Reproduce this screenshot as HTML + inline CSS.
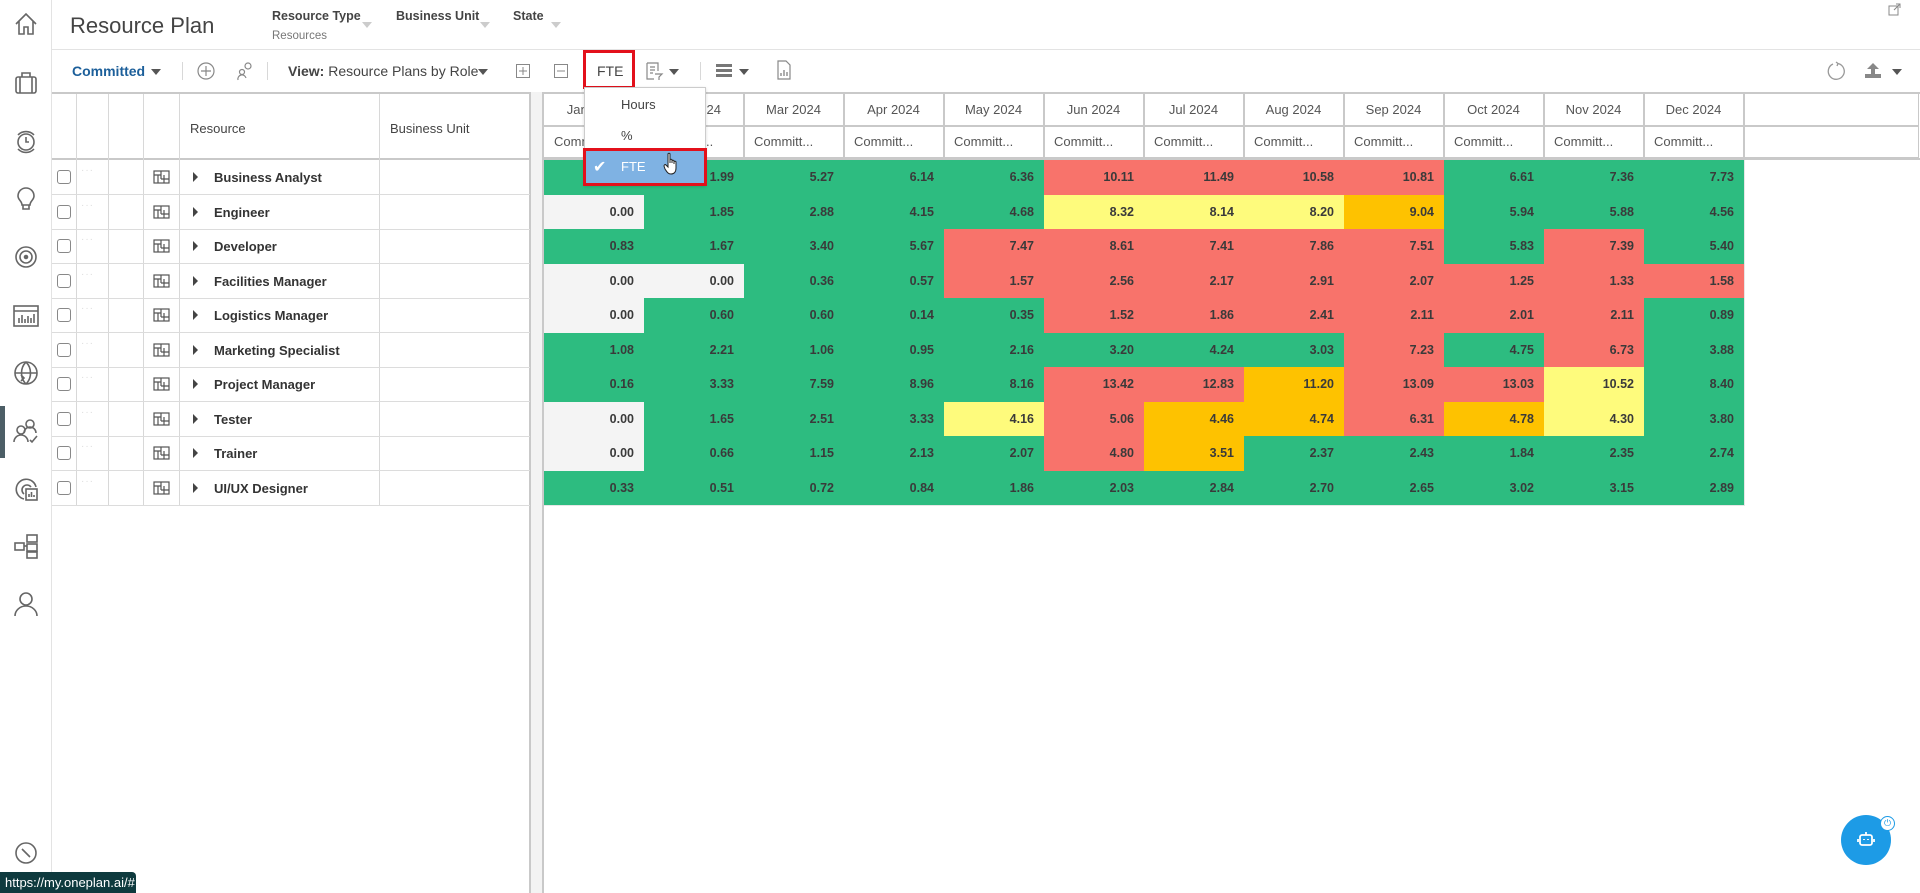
<!DOCTYPE html>
<html><head><meta charset="utf-8"><style>
*{box-sizing:border-box;margin:0;padding:0}
body{width:1920px;height:893px;overflow:hidden;background:#fff;font-family:"Liberation Sans",sans-serif;color:#333;position:relative}
.a{position:absolute}
.sb{left:0;top:0;width:52px;height:893px;border-right:1px solid #e3e3e3}
.ic{position:absolute;left:12px;width:28px;height:28px}
.t{font-size:13px;color:#444;white-space:nowrap}
.vl{position:absolute;background:#d8d8d8;width:1px}
.hl{position:absolute;background:#dcdcdc;height:1px}
.cell{position:absolute;height:34px;font-size:12.5px;font-weight:bold;color:#3a3a3a;text-align:right;padding-right:10px;line-height:34px;border-right:1px solid #e6e6e6;border-bottom:1px solid #e6e6e6}
.g{background:#2dbc80}.r{background:#f8736b}.y{background:#fefb7c}.o{background:#fec200}.n{background:#f4f4f4}
.hd{position:absolute;height:33px;border-right:2px solid #c9c9c9;border-bottom:2px solid #c9c9c9;font-size:13px;color:#555;line-height:31px;white-space:nowrap;overflow:hidden}
.car{display:inline-block;width:0;height:0;border-left:5px solid transparent;border-right:5px solid transparent;border-top:6px solid #555;vertical-align:middle}
</style></head><body>

<!-- sidebar -->
<div class="a sb"></div>
<div class="a" style="left:0;top:406px;width:5px;height:52px;background:#4c5e66"></div>
<svg class="ic" style="top:10px" viewBox="0 0 28 28" fill="none" stroke="#666" stroke-width="1.6"><path d="M4 14 L14 4 L24 14 M7 11 V24 H12 V17 H16 V24 H21 V11"/></svg>
<svg class="ic" style="top:69px" viewBox="0 0 28 28" fill="none" stroke="#666" stroke-width="1.6"><rect x="4" y="8" width="20" height="16" rx="2"/><path d="M10 8V4H18V8M8 8V24M20 8V24"/></svg>
<svg class="ic" style="top:127px" viewBox="0 0 28 28" fill="none" stroke="#666" stroke-width="1.6"><circle cx="14" cy="15" r="8"/><path d="M14 10V15H17M6 8A11 11 0 0 1 22 8M6 22A11 11 0 0 0 22 22"/></svg>
<svg class="ic" style="top:186px" viewBox="0 0 28 28" fill="none" stroke="#666" stroke-width="1.6"><path d="M10 19C10 15 6 14 6 10A8 8 0 0 1 22 10C22 14 18 15 18 19ZM11 19V23H17V19"/></svg>
<svg class="ic" style="top:243px" viewBox="0 0 28 28" fill="none" stroke="#666" stroke-width="1.6"><circle cx="14" cy="14" r="10"/><circle cx="14" cy="14" r="6"/><circle cx="14" cy="14" r="1.5" fill="#666"/></svg>
<svg class="ic" style="top:302px" viewBox="0 0 28 28" fill="none" stroke="#666" stroke-width="1.6"><rect x="2" y="4" width="24" height="20"/><path d="M2 9H26M7 21V16M10 21V13M13 21V17M16 21V14M19 21V16M22 21V12"/></svg>
<svg class="ic" style="top:359px" viewBox="0 0 28 28" fill="none" stroke="#666" stroke-width="1.6"><circle cx="14" cy="14" r="11"/><path d="M3 14H25M14 3C8 9 8 19 14 25M14 3C20 9 20 19 14 25M9 16L12 19L9 22"/></svg>
<svg class="ic" style="top:417px" viewBox="0 0 28 28" fill="none" stroke="#666" stroke-width="1.6"><circle cx="18" cy="7" r="4"/><path d="M12 16A6 6 0 0 1 24 16"/><circle cx="9" cy="13" r="4"/><path d="M2 25A7 7 0 0 1 16 25M18 23L20 25L25 19"/></svg>
<svg class="ic" style="top:475px" viewBox="0 0 28 28" fill="none" stroke="#666" stroke-width="1.6"><path d="M12 24A10 10 0 1 1 24 12"/><path d="M12 19A5 5 0 1 1 19 12"/><rect x="14" y="14" width="11" height="11"/><path d="M17 22V19M19.5 22V17M22 22V20"/></svg>
<svg class="ic" style="top:532px" viewBox="0 0 28 28" fill="none" stroke="#666" stroke-width="1.6"><rect x="3" y="11" width="9" height="7"/><rect x="15" y="3" width="10" height="7"/><rect x="15" y="12" width="10" height="7"/><rect x="15" y="20" width="10" height="6"/><path d="M12 14H15"/></svg>
<svg class="ic" style="top:590px" viewBox="0 0 28 28" fill="none" stroke="#666" stroke-width="1.6"><circle cx="14" cy="9" r="6"/><path d="M3 26A11 10 0 0 1 25 26"/></svg>
<svg class="ic" style="top:839px" viewBox="0 0 28 28" fill="none" stroke="#666" stroke-width="1.6"><circle cx="14" cy="14" r="10"/><path d="M10 10L16 16L18 18L12 12Z"/></svg>

<!-- header -->
<div class="a" style="left:70px;top:13px;font-size:22px;color:#444">Resource Plan</div>
<div class="a t" style="left:272px;top:9px;font-weight:bold;font-size:12.5px">Resource Type</div>
<div class="a t" style="left:272px;top:30px;font-size:11.5px;color:#777">Resources</div>
<div class="a" style="left:362px;top:22px;border-left:5px solid transparent;border-right:5px solid transparent;border-top:6px solid #ccc"></div>
<div class="a t" style="left:396px;top:9px;font-weight:bold;font-size:12.5px">Business Unit</div>
<div class="a" style="left:480px;top:22px;border-left:5px solid transparent;border-right:5px solid transparent;border-top:6px solid #ccc"></div>
<div class="a t" style="left:513px;top:9px;font-weight:bold;font-size:12.5px">State</div>
<div class="a" style="left:551px;top:22px;border-left:5px solid transparent;border-right:5px solid transparent;border-top:6px solid #ccc"></div>
<svg class="a" style="left:1888px;top:3px" width="14" height="13" viewBox="0 0 14 13" fill="none" stroke="#888"><rect x="1" y="3" width="9" height="9"/><path d="M6 7L12 1M8 1H12V5"/></svg>
<div class="hl" style="left:52px;top:49px;width:1868px;background:#e3e3e3"></div>

<!-- toolbar -->
<div class="a t" style="left:72px;top:63px;color:#1c5f9a;font-weight:bold;font-size:14px">Committed</div>
<div class="a car" style="left:151px;top:69px"></div>
<div class="vl" style="left:182px;top:62px;height:18px"></div>
<svg class="a" style="left:196px;top:61px" width="20" height="20" viewBox="0 0 20 20" fill="none" stroke="#888" stroke-width="1.2"><circle cx="10" cy="10" r="8"/><path d="M10 5V15M5 10H15"/></svg>
<svg class="a" style="left:235px;top:61px" width="20" height="20" viewBox="0 0 20 20" fill="none" stroke="#888" stroke-width="1.2"><circle cx="13" cy="5" r="3"/><circle cx="7" cy="11" r="2.5"/><path d="M3 19A4 4 0 0 1 11 17"/></svg>
<div class="vl" style="left:267px;top:62px;height:18px"></div>
<div class="a t" style="left:288px;top:63px;font-size:14px"><b>View:</b> Resource Plans by Role</div>
<div class="a car" style="left:478px;top:69px"></div>
<svg class="a" style="left:515px;top:63px" width="16" height="16" viewBox="0 0 16 16" fill="none" stroke="#888"><rect x="1.5" y="1.5" width="13" height="13"/><path d="M8 4V12M4 8H12"/></svg>
<svg class="a" style="left:553px;top:63px" width="16" height="16" viewBox="0 0 16 16" fill="none" stroke="#888"><rect x="1.5" y="1.5" width="13" height="13"/><path d="M4 8H12"/></svg>
<div class="a" style="left:583px;top:50px;width:52px;height:39px;border:3px solid #e3101b"></div>
<div class="a t" style="left:597px;top:63px;font-size:14px">FTE</div>
<svg class="a" style="left:644px;top:61px" width="20" height="20" viewBox="0 0 20 20" fill="none" stroke="#888" stroke-width="1.2"><path d="M3 2H14V10M3 2V18H10M6 6H11M6 9H11M6 12H9M11 13H18L15 16V19"/></svg>
<div class="a car" style="left:669px;top:69px"></div>
<div class="vl" style="left:700px;top:62px;height:18px"></div>
<div class="a" style="left:716px;top:64px;width:16px;height:2.5px;background:#777;box-shadow:0 5px 0 #777,0 10px 0 #777"></div>
<div class="a car" style="left:739px;top:69px"></div>
<svg class="a" style="left:776px;top:60px" width="16" height="20" viewBox="0 0 16 20" fill="none" stroke="#888" stroke-width="1.2"><path d="M2 1H10L14 5V19H2Z"/><path d="M5 16V13M8 16V10M11 16V12" stroke="#777"/></svg>
<svg class="a" style="left:1826px;top:61px" width="20" height="20" viewBox="0 0 20 20" fill="none" stroke="#999" stroke-width="1.3"><path d="M7 3A8 8 0 1 0 12 2.5M12 2.5L10 1M12 2.5L11 5"/></svg>
<svg class="a" style="left:1864px;top:62px" width="18" height="17" viewBox="0 0 18 17" fill="#888"><path d="M9 1L15 7H11V12H7V7H3Z"/><rect x="1" y="12" width="16" height="4"/></svg>
<div class="a car" style="left:1892px;top:69px"></div>

<!-- left grid -->
<div class="hl" style="left:52px;top:92px;width:478px;height:2px;background:#c9c9c9"></div>
<div class="hl" style="left:52px;top:158px;width:478px;height:2px;background:#c9c9c9"></div>
<div class="vl" style="left:76px;top:94px;height:411px"></div>
<div class="vl" style="left:108px;top:94px;height:411px"></div>
<div class="vl" style="left:143px;top:94px;height:411px"></div>
<div class="vl" style="left:179px;top:94px;height:411px"></div>
<div class="vl" style="left:379px;top:94px;height:411px"></div>
<div class="a t" style="left:190px;top:121px">Resource</div>
<div class="a t" style="left:390px;top:121px">Business Unit</div>
<div class="a" style="left:529px;top:92px;width:15px;height:801px;background:#f3f3f3;border-left:2px solid #c9c9c9;border-right:2px solid #c9c9c9"></div>

<div id="left"></div>
<div id="right"></div>

<!-- right grid header -->
<div class="hl" style="left:544px;top:92px;width:1376px;height:2px;background:#c9c9c9"></div>
<div class="hl" style="left:544px;top:158px;width:1376px;height:2px;background:#c9c9c9"></div>
<div class="vl" style="left:1918px;top:92px;height:68px;background:#c9c9c9"></div>

<!-- dropdown -->
<div class="a" style="left:584px;top:87px;width:122px;height:99px;background:#fff;border:1px solid #ccc;box-shadow:0 1px 3px rgba(0,0,0,.15)"></div>
<div class="a t" style="left:621px;top:97px">Hours</div>
<div class="a t" style="left:621px;top:128px">%</div>
<div class="a" style="left:583px;top:148px;width:124px;height:38px;background:#7fb2e3;border:3px solid #e3101b"></div>
<div class="a" style="left:593px;top:157px;color:#fff;font-size:16px">&#10004;</div>
<div class="a t" style="left:621px;top:159px;color:#fff">FTE</div>
<svg class="a" style="left:663px;top:152px" width="18" height="24" viewBox="0 0 18 24"><path d="M5 2C5 1 7 1 7 2V11V8C7 7 9 7 9 8V11V9C9 8 11 8 11 9V12V10C11 9 13 9 13 10V16C13 20 11 22 8 22C5 22 4 20 2 17L1 14C1 13 2 12 3 13L5 15Z" fill="#fff" stroke="#222" stroke-width="1"/></svg>

<!-- chat button -->
<div class="a" style="left:1841px;top:815px;width:50px;height:50px;border-radius:50%;background:#1d9be6"></div>
<svg class="a" style="left:1856px;top:830px" width="20" height="20" viewBox="0 0 20 20" fill="none" stroke="#fff" stroke-width="1.8"><rect x="4" y="5" width="12" height="10" rx="2"/><path d="M2 9V12M18 9V12M8 9V10M12 9V10M10 2V5"/></svg>
<div class="a" style="left:1880px;top:816px;width:15px;height:15px;border-radius:50%;background:#fff;border:1px solid #1d9be6;color:#1d9be6;font-size:9px;text-align:center;line-height:13px">&#9211;</div>

<!-- status bar -->
<div class="a" style="left:0;top:872px;width:136px;height:21px;background:#0e3a3e;border-radius:0 4px 0 0;color:#fff;font-size:13px;line-height:21px;padding-left:5px">https://my.oneplan.ai/#</div>

<script>
var months=["Jan 2024","Feb 2024","Mar 2024","Apr 2024","May 2024","Jun 2024","Jul 2024","Aug 2024","Sep 2024","Oct 2024","Nov 2024","Dec 2024"];
var rows=[
["Business Analyst","1.05g 1.99g 5.27g 6.14g 6.36g 10.11r 11.49r 10.58r 10.81r 6.61g 7.36g 7.73g"],
["Engineer","0.00n 1.85g 2.88g 4.15g 4.68g 8.32y 8.14y 8.20y 9.04o 5.94g 5.88g 4.56g"],
["Developer","0.83g 1.67g 3.40g 5.67g 7.47r 8.61r 7.41r 7.86r 7.51r 5.83g 7.39r 5.40g"],
["Facilities Manager","0.00n 0.00n 0.36g 0.57g 1.57r 2.56r 2.17r 2.91r 2.07r 1.25r 1.33r 1.58r"],
["Logistics Manager","0.00n 0.60g 0.60g 0.14g 0.35g 1.52r 1.86r 2.41r 2.11r 2.01r 2.11r 0.89g"],
["Marketing Specialist","1.08g 2.21g 1.06g 0.95g 2.16g 3.20g 4.24g 3.03g 7.23r 4.75g 6.73r 3.88g"],
["Project Manager","0.16g 3.33g 7.59g 8.96g 8.16g 13.42r 12.83r 11.20o 13.09r 13.03r 10.52y 8.40g"],
["Tester","0.00n 1.65g 2.51g 3.33g 4.16y 5.06r 4.46o 4.74o 6.31r 4.78o 4.30y 3.80g"],
["Trainer","0.00n 0.66g 1.15g 2.13g 2.07g 4.80r 3.51o 2.37g 2.43g 1.84g 2.35g 2.74g"],
["UI/UX Designer","0.33g 0.51g 0.72g 0.84g 1.86g 2.03g 2.84g 2.70g 2.65g 3.02g 3.15g 2.89g"]];
var L="",R="";
for(var m=0;m<12;m++){var x=544+m*100;
R+='<div class="hd" style="left:'+x+'px;top:94px;width:101px;text-align:center;border-left:'+(m==0?'0':'0')+'">'+months[m]+'</div>';
R+='<div class="hd" style="left:'+x+'px;top:126px;width:101px;padding-left:10px">Committ...</div>';}
R+='<div class="hd" style="left:1744px;top:94px;width:175px;border-right:0"></div><div class="hd" style="left:1744px;top:126px;width:175px;border-right:0"></div>';
for(var i=0;i<10;i++){var y=160+i*34.5;
L+='<div class="hl" style="left:52px;top:'+(y+34)+'px;width:478px"></div>';
L+='<div class="a" style="left:57px;top:'+(y+10)+'px;width:14px;height:14px;border:1.5px solid #888;border-radius:3px"></div>';
L+='<div class="a" style="left:81px;top:'+(y+5)+'px;color:#ddd;font-size:10px;letter-spacing:1px">···</div>';
L+='<svg class="a" style="left:153px;top:'+(y+10)+'px" width="17" height="14" viewBox="0 0 17 14" fill="none" stroke="#555" stroke-width="1.2"><rect x="1" y="1" width="15" height="12"/><path d="M1 5H8M8 1V9M5 5V13M8 9H16M11 5V9M11 9V13"/></svg>';
L+='<div class="a" style="left:193px;top:'+(y+12)+'px;border-top:5px solid transparent;border-bottom:5px solid transparent;border-left:5px solid #444"></div>';
L+='<div class="a t" style="left:214px;top:'+(y+10)+'px;font-weight:bold;color:#333">'+rows[i][0]+'</div>';
var v=rows[i][1].split(" ");
for(var m=0;m<12;m++){var s=v[m],c=s.slice(-1),t=s.slice(0,-1);
R+='<div class="cell '+c+'" style="left:'+(544+m*100)+'px;top:'+y+'px;width:101px;height:35.5px;line-height:34px">'+t+'</div>';}}
document.getElementById("left").outerHTML=L;
document.getElementById("right").outerHTML=R;
</script>
</body></html>
